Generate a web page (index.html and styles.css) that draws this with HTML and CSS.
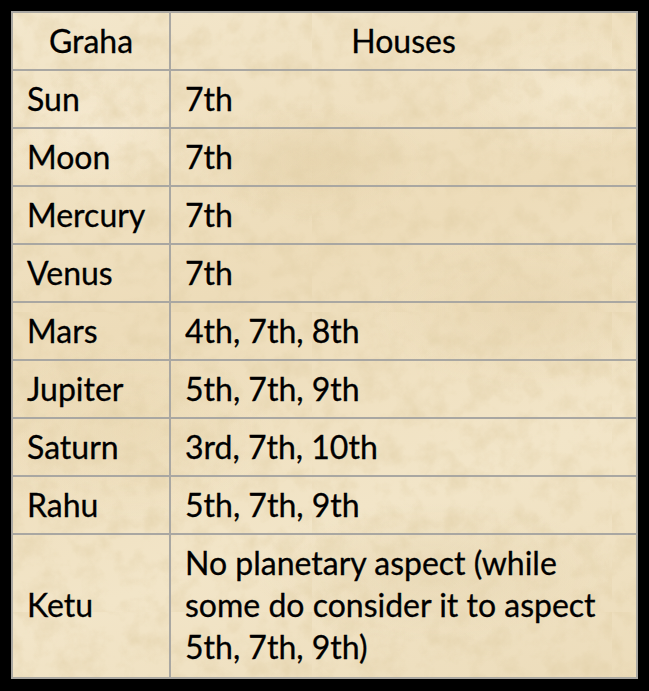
FILE: index.html
```html
<!DOCTYPE html>
<html>
<head>
<meta charset="utf-8">
<link rel="stylesheet" href="styles.css">
</head>
<body>
<div class="frame">
<table class="aspects">
<thead>
<tr><th class="c1">Graha</th><th class="c2">Houses</th></tr>
</thead>
<tbody>
<tr><td class="c1">Sun</td><td class="c2">7th</td></tr>
<tr><td class="c1">Moon</td><td class="c2">7th</td></tr>
<tr><td class="c1">Mercury</td><td class="c2">7th</td></tr>
<tr><td class="c1">Venus</td><td class="c2">7th</td></tr>
<tr><td class="c1">Mars</td><td class="c2">4th, 7th, 8th</td></tr>
<tr><td class="c1">Jupiter</td><td class="c2">5th, 7th, 9th</td></tr>
<tr><td class="c1">Saturn</td><td class="c2">3rd, 7th, 10th</td></tr>
<tr><td class="c1">Rahu</td><td class="c2">5th, 7th, 9th</td></tr>
<tr class="tall"><td class="c1">Ketu</td><td class="c2">No planetary aspect (while<br>some do consider it to aspect<br>5th, 7th, 9th)</td></tr>
</tbody>
</table>
</div>
</body>
</html>
```
FILE: styles.css
```css
html, body {
  margin: 0;
  padding: 0;
  background: #000;
}
.frame {
  padding: 11px 11px 12px 11px;
  width: 649px;
  height: 691px;
  box-sizing: border-box;
}
.aspects {
  width: 627px;
  height: 668px;
  border-collapse: collapse;
  font-family: "Lato", "Open Sans", sans-serif;
  font-size: 32px;
  color: #000;
  -webkit-text-stroke: 0.3px #000;
  background-color: #f0e2c3;
  background-image:
    url("data:image/svg+xml,%3Csvg xmlns='http://www.w3.org/2000/svg' width='300' height='300'%3E%3Cfilter id='n'%3E%3CfeTurbulence type='fractalNoise' baseFrequency='0.045' numOctaves='4' seed='7'/%3E%3CfeColorMatrix values='0 0 0 0 0.75 0 0 0 0 0.62 0 0 0 0 0.38 0 0 0 1.1 -0.45'/%3E%3C/filter%3E%3Crect width='300' height='300' filter='url(%23n)'/%3E%3C/svg%3E"),
    radial-gradient(ellipse 120px 60px at 300px 150px, rgba(214,190,140,0.3), transparent),
    radial-gradient(ellipse 160px 80px at 520px 300px, rgba(220,196,150,0.3), transparent),
    radial-gradient(ellipse 140px 90px at 120px 420px, rgba(225,205,160,0.25), transparent),
    radial-gradient(ellipse 180px 70px at 420px 560px, rgba(215,195,150,0.25), transparent),
    radial-gradient(ellipse 100px 60px at 80px 120px, rgba(250,240,220,0.5), transparent),
    radial-gradient(ellipse 130px 70px at 560px 80px, rgba(250,242,222,0.45), transparent),
    linear-gradient(160deg, #f3e7cc 0%, #eddcb9 40%, #f2e5c8 70%, #ecdcba 100%);
}
.aspects th, .aspects td {
  border: 2px solid #a9a7a2;
  padding: 0 14px;
  height: 56px;
  font-weight: normal;
  text-align: left;
  line-height: 42px;
  white-space: nowrap;
}
.aspects th {
  text-align: center;
}
.c1 {
  width: 128px;
}
.tall td {
  height: auto;
  padding-top: 4px;
  padding-bottom: 6px;
}
```
